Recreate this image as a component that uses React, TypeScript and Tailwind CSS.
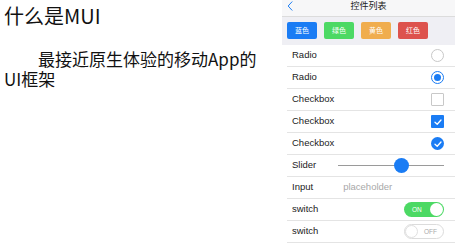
import React from "react";

const rowText = "text-[9.5px] text-[#222] [font-family:'Liberation_Sans',Arial,sans-serif]";

function Row({ label, children }: { label: string; children?: React.ReactNode }) {
  return (
    <div className="ml-[5px] flex h-[22px] items-center border-b border-[#e4e4e4] pl-[5px] pr-[11px]">
      <span className={rowText}>{label}</span>
      {children}
    </div>
  );
}

const Check = ({ className = "" }: { className?: string }) => (
  <svg viewBox="0 0 12 12" className={className}>
    <path d="M3 6.2 L5.2 8.2 L9 4" fill="none" stroke="#fff" strokeWidth="1.3" strokeLinecap="round" strokeLinejoin="round" />
  </svg>
);

export default function App() {
  const colors = [
    { name: "蓝色", bg: "bg-[#1a7cf4]" },
    { name: "绿色", bg: "bg-[#4cd964]" },
    { name: "黄色", bg: "bg-[#f0ad4e]" },
    { name: "红色", bg: "bg-[#dd524d]" },
  ];

  return (
    <div className="flex h-[246px] w-[474px] bg-white [font-family:'Noto_Sans_CJK_SC',sans-serif]">
      <div className="w-[282px] pl-[4px] pt-[3px] text-[#111]">
        <h1 className="text-[20px] leading-[26px] font-normal">什么是MUI</h1>
        <p className="mt-[20px] w-[258px] text-[17px] leading-[20px] indent-[34px]">
          最接近原生体验的移动App的UI框架
        </p>
      </div>

      <div className="w-[173px] bg-white">
        <div className="relative flex h-[17px] items-start justify-center border-b border-[#dcdcdc] bg-[#f7f7f8]">
          <svg viewBox="0 0 8 14" className="absolute left-[5px] top-[0px] h-[12px] w-[6px]">
            <path d="M7 1 L1.5 7 L7 13" fill="none" stroke="#1a7cf4" strokeWidth="1.3" />
          </svg>
          <span className="text-[9px] leading-[11px] text-[#222]">控件列表</span>
        </div>
        <div className="flex h-[28px] items-start gap-[7px] bg-[#efeff4] pl-[5px] pt-[5px]">
          {colors.map((c) => (
            <div
              key={c.name}
              className={`flex h-[17px] w-[30px] items-center justify-center rounded-[2px] text-[7px] text-white ${c.bg}`}
            >
              {c.name}
            </div>
          ))}
        </div>

        <Row label="Radio">
          <div className="ml-auto h-[13px] w-[13px] rounded-full border border-[#c8c8c8]" />
        </Row>
        <Row label="Radio">
          <div className="ml-auto flex h-[13px] w-[13px] items-center justify-center rounded-full border border-[#1a7cf4]">
            <div className="h-[7px] w-[7px] rounded-full bg-[#1a7cf4]" />
          </div>
        </Row>
        <Row label="Checkbox">
          <div className="ml-auto h-[13px] w-[13px] rounded-[1px] border border-[#c8c8c8]" />
        </Row>
        <Row label="Checkbox">
          <div className="ml-auto flex h-[13px] w-[13px] items-center justify-center rounded-[1px] bg-[#1a7cf4]">
            <Check className="h-[12px] w-[12px]" />
          </div>
        </Row>
        <Row label="Checkbox">
          <div className="ml-auto flex h-[13px] w-[13px] items-center justify-center rounded-full bg-[#1a7cf4]">
            <Check className="h-[12px] w-[12px]" />
          </div>
        </Row>
        <Row label="Slider">
          <div className="relative ml-[22px] flex h-full flex-1 items-center">
            <div className="h-[1px] w-full bg-[#9a9a9a]" />
            <div className="absolute left-[56px] top-[3px] h-[15px] w-[15px] rounded-full bg-[#1a7cf4]" />
          </div>
        </Row>
        <Row label="Input">
          <span className="ml-[30px] text-[9.5px] text-[#a8a8a8] [font-family:'Liberation_Sans',Arial,sans-serif]">
            placeholder
          </span>
        </Row>
        <Row label="switch">
          <div className="ml-auto flex h-[15px] w-[40px] items-center justify-between rounded-full bg-[#4cd964] pl-[8px] pr-[1px]">
            <span className="text-[6.5px] text-white [font-family:'Liberation_Sans',Arial,sans-serif]">ON</span>
            <div className="h-[13px] w-[13px] rounded-full bg-white" />
          </div>
        </Row>
        <Row label="switch">
          <div className="ml-auto flex h-[15px] w-[40px] items-center justify-between rounded-full border border-[#dcdcdc] bg-white pl-[0px] pr-[6px]">
            <div className="h-[13px] w-[13px] rounded-full border border-[#e0e0e0] bg-white" />
            <span className="text-[6.5px] text-[#aaa] [font-family:'Liberation_Sans',Arial,sans-serif]">OFF</span>
          </div>
        </Row>
      </div>
    </div>
  );
}
